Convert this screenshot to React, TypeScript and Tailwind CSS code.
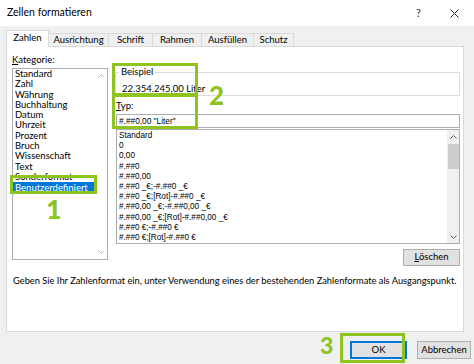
import React from "react";

const categories = [
  "Standard",
  "Zahl",
  "Währung",
  "Buchhaltung",
  "Datum",
  "Uhrzeit",
  "Prozent",
  "Bruch",
  "Wissenschaft",
  "Text",
  "Sonderformat",
  "Benutzerdefiniert",
];

const formats = [
  "Standard",
  "0",
  "0,00",
  "#.##0",
  "#.##0,00",
  "#.##0 _€;-#.##0 _€",
  "#.##0 _€;[Rot]-#.##0 _€",
  "#.##0,00 _€;-#.##0,00 _€",
  "#.##0,00 _€;[Rot]-#.##0,00 _€",
  "#.##0 €;-#.##0 €",
  "#.##0 €;[Rot]-#.##0 €",
];

const tabs = [
  { label: "Zahlen", w: "w-[43px]" },
  { label: "Ausrichtung", w: "w-[60px]" },
  { label: "Schrift", w: "w-[44px]" },
  { label: "Rahmen", w: "w-[49px]" },
  { label: "Ausfüllen", w: "w-[52px]" },
  { label: "Schutz", w: "w-[40px]" },
];

function ChevUp({ color = "#a0a0a0" }: { color?: string }) {
  return (
    <svg width="7" height="4" viewBox="0 0 7 4">
      <path d="M0.5 3.5 L3.5 0.5 L6.5 3.5" fill="none" stroke={color} strokeWidth="1" />
    </svg>
  );
}
function ChevDown({ color = "#a0a0a0" }: { color?: string }) {
  return (
    <svg width="7" height="4" viewBox="0 0 7 4">
      <path d="M0.5 0.5 L3.5 3.5 L6.5 0.5" fill="none" stroke={color} strokeWidth="1" />
    </svg>
  );
}

export default function App() {
  return (
    <div className="relative w-[474px] h-[364px] overflow-hidden bg-[#f0f0f0] text-black [font-family:Lato,'Noto_Sans',sans-serif] flex flex-col">
      {/* Title bar */}
      <div className="h-[26px] bg-white flex items-center pl-[7px] pr-[15px] shrink-0">
        <div className="text-[10.5px] flex-1">Zellen formatieren</div>
        <div className="text-[11px] text-[#333] mr-[29px]">?</div>
        <svg width="9" height="9" viewBox="0 0 9 9">
          <path d="M0.5 0.5 L8.5 8.5 M8.5 0.5 L0.5 8.5" stroke="#222" strokeWidth="1" />
        </svg>
      </div>

      {/* Body */}
      <div className="flex flex-col pt-[4px] px-[6px]">
        {/* Tabs */}
        <div className="flex items-end h-[17px] relative z-10 -mb-px">
          {tabs.map((t, i) =>
            i === 0 ? (
              <div
                key={t.label}
                className={`${t.w} h-[17px] bg-white border border-b-0 border-[#d9d9d9] flex items-center justify-center text-[9.5px] pb-[1px]`}
              >
                {t.label}
              </div>
            ) : (
              <div
                key={t.label}
                className={`${t.w} h-[14px] bg-[#f0f0f0] border border-l-0 border-[#d9d9d9] flex items-center justify-center text-[9.5px]`}
              >
                {t.label}
              </div>
            )
          )}
        </div>

        {/* Panel */}
        <div className="w-[458px] h-[286px] bg-white border border-[#d9d9d9] flex flex-col">
          <div className="flex pt-[7px] pl-[5px]">
            {/* Left column */}
            <div className="w-[96px] flex flex-col">
              <div className="h-[12px] text-[9.5px] leading-[12px]">
                <span className="underline">K</span>ategorie:
              </div>
              <div className="mt-[2px] h-[192px] border border-[#abadb3] flex">
                <div className="flex-1 flex flex-col text-[9.5px] leading-[10.3px]">
                  {categories.map((c) =>
                    c === "Benutzerdefiniert" ? (
                      <div key={c} className="bg-[#0078d7] text-white pl-[2px] h-[11px] leading-[11px]">
                        {c}
                      </div>
                    ) : (
                      <div key={c} className="pl-[2px]">
                        {c}
                      </div>
                    )
                  )}
                </div>
                <div className="w-[12px] flex flex-col items-center justify-between py-[5px]">
                  <ChevUp color="#b8b8b8" />
                  <ChevDown color="#b8b8b8" />
                </div>
              </div>
            </div>

            {/* Right column */}
            <div className="ml-[7px] w-[345px] flex flex-col">
              <div className="relative mt-[18px] h-[24px] border border-[#dcdcdc]">
                <div className="absolute -top-[7px] left-[3px] bg-white px-[2px] text-[9.5px] leading-[12px]">
                  Beispiel
                </div>
                <div className="absolute left-[6px] top-[10px] text-[9.5px] leading-[12px]">
                  22.354.245,00 Liter
                </div>
              </div>
              <div className="mt-[4px] h-[12px] text-[9.5px] leading-[12px] ml-[1px]">
                <span className="underline">T</span>yp:
              </div>
              <div className="mt-[2px] ml-[1px] h-[14px] border border-[#abadb3] flex items-center pl-[2px] text-[8.3px] [font-family:'Liberation_Sans',Arial,sans-serif]">
                #.##0,00 "Liter"
              </div>
              <div className="mt-[1px] ml-[1px] h-[115px] border border-[#abadb3] flex">
                <div className="flex-1 flex flex-col pt-[1px] pl-[2px] text-[8.2px] leading-[10.2px] [font-family:'Liberation_Sans',Arial,sans-serif]">
                  {formats.map((f) => (
                    <div key={f} className="whitespace-pre">
                      {f}
                    </div>
                  ))}
                </div>
                <div className="w-[12px] bg-[#f0f0f0] flex flex-col items-center">
                  <div className="h-[14px] flex items-center justify-center">
                    <ChevUp color="#606060" />
                  </div>
                  <div className="w-[11px] h-[25px] bg-[#cdcdcd]" />
                  <div className="flex-1" />
                  <div className="h-[12px] flex items-center justify-center">
                    <ChevDown color="#606060" />
                  </div>
                </div>
              </div>
              <div className="mt-[5px] self-end w-[57px] h-[17px] bg-[#e1e1e1] border border-[#adadad] flex items-center justify-center text-[9.5px]">
                <span>
                  <span className="underline">L</span>öschen
                </span>
              </div>
            </div>
          </div>
          <div className="mt-[9px] pl-[6px] text-[9.3px] leading-[12px] whitespace-nowrap">
            Geben Sie Ihr Zahlenformat ein, unter Verwendung eines der bestehenden Zahlenformate als Ausgangspunkt.
          </div>
        </div>

        {/* Buttons */}
        <div className="flex justify-end gap-[10px] mt-[9px] -mr-[3px]">
          <div className="w-[57px] h-[18px] bg-[#e1e1e1] border-2 border-[#0078d7] flex items-center justify-center text-[9.5px]">
            OK
          </div>
          <div className="w-[54px] h-[18px] bg-[#e1e1e1] border border-[#adadad] flex items-center justify-center text-[9.5px]">
            Abbrechen
          </div>
        </div>
      </div>

      {/* Green annotation overlays */}
      <div className="absolute left-[10px] top-[175px] w-[87px] h-[19px] border-[3px] border-[#8fc31f]" />
      <div className="absolute left-[46px] top-[195px] text-[27px] font-black leading-none text-[#8fc31f]">1</div>

      <div className="absolute left-[112px] top-[63px] w-[86px] h-[34px] border-[3px] border-[#8fc31f]" />
      <div className="absolute left-[112px] top-[93px] w-[86px] h-[36px] border-[3px] border-[#8fc31f]" />
      <div className="absolute left-[209px] top-[82px] text-[26px] font-black leading-none text-[#8fc31f]">2</div>

      <div className="absolute left-[340px] top-[333px] w-[65px] h-[30px] border-[3px] border-[#8fc31f]" />
      <div className="absolute left-[320px] top-[334px] text-[23px] font-black leading-none text-[#8fc31f]">3</div>
    </div>
  );
}
